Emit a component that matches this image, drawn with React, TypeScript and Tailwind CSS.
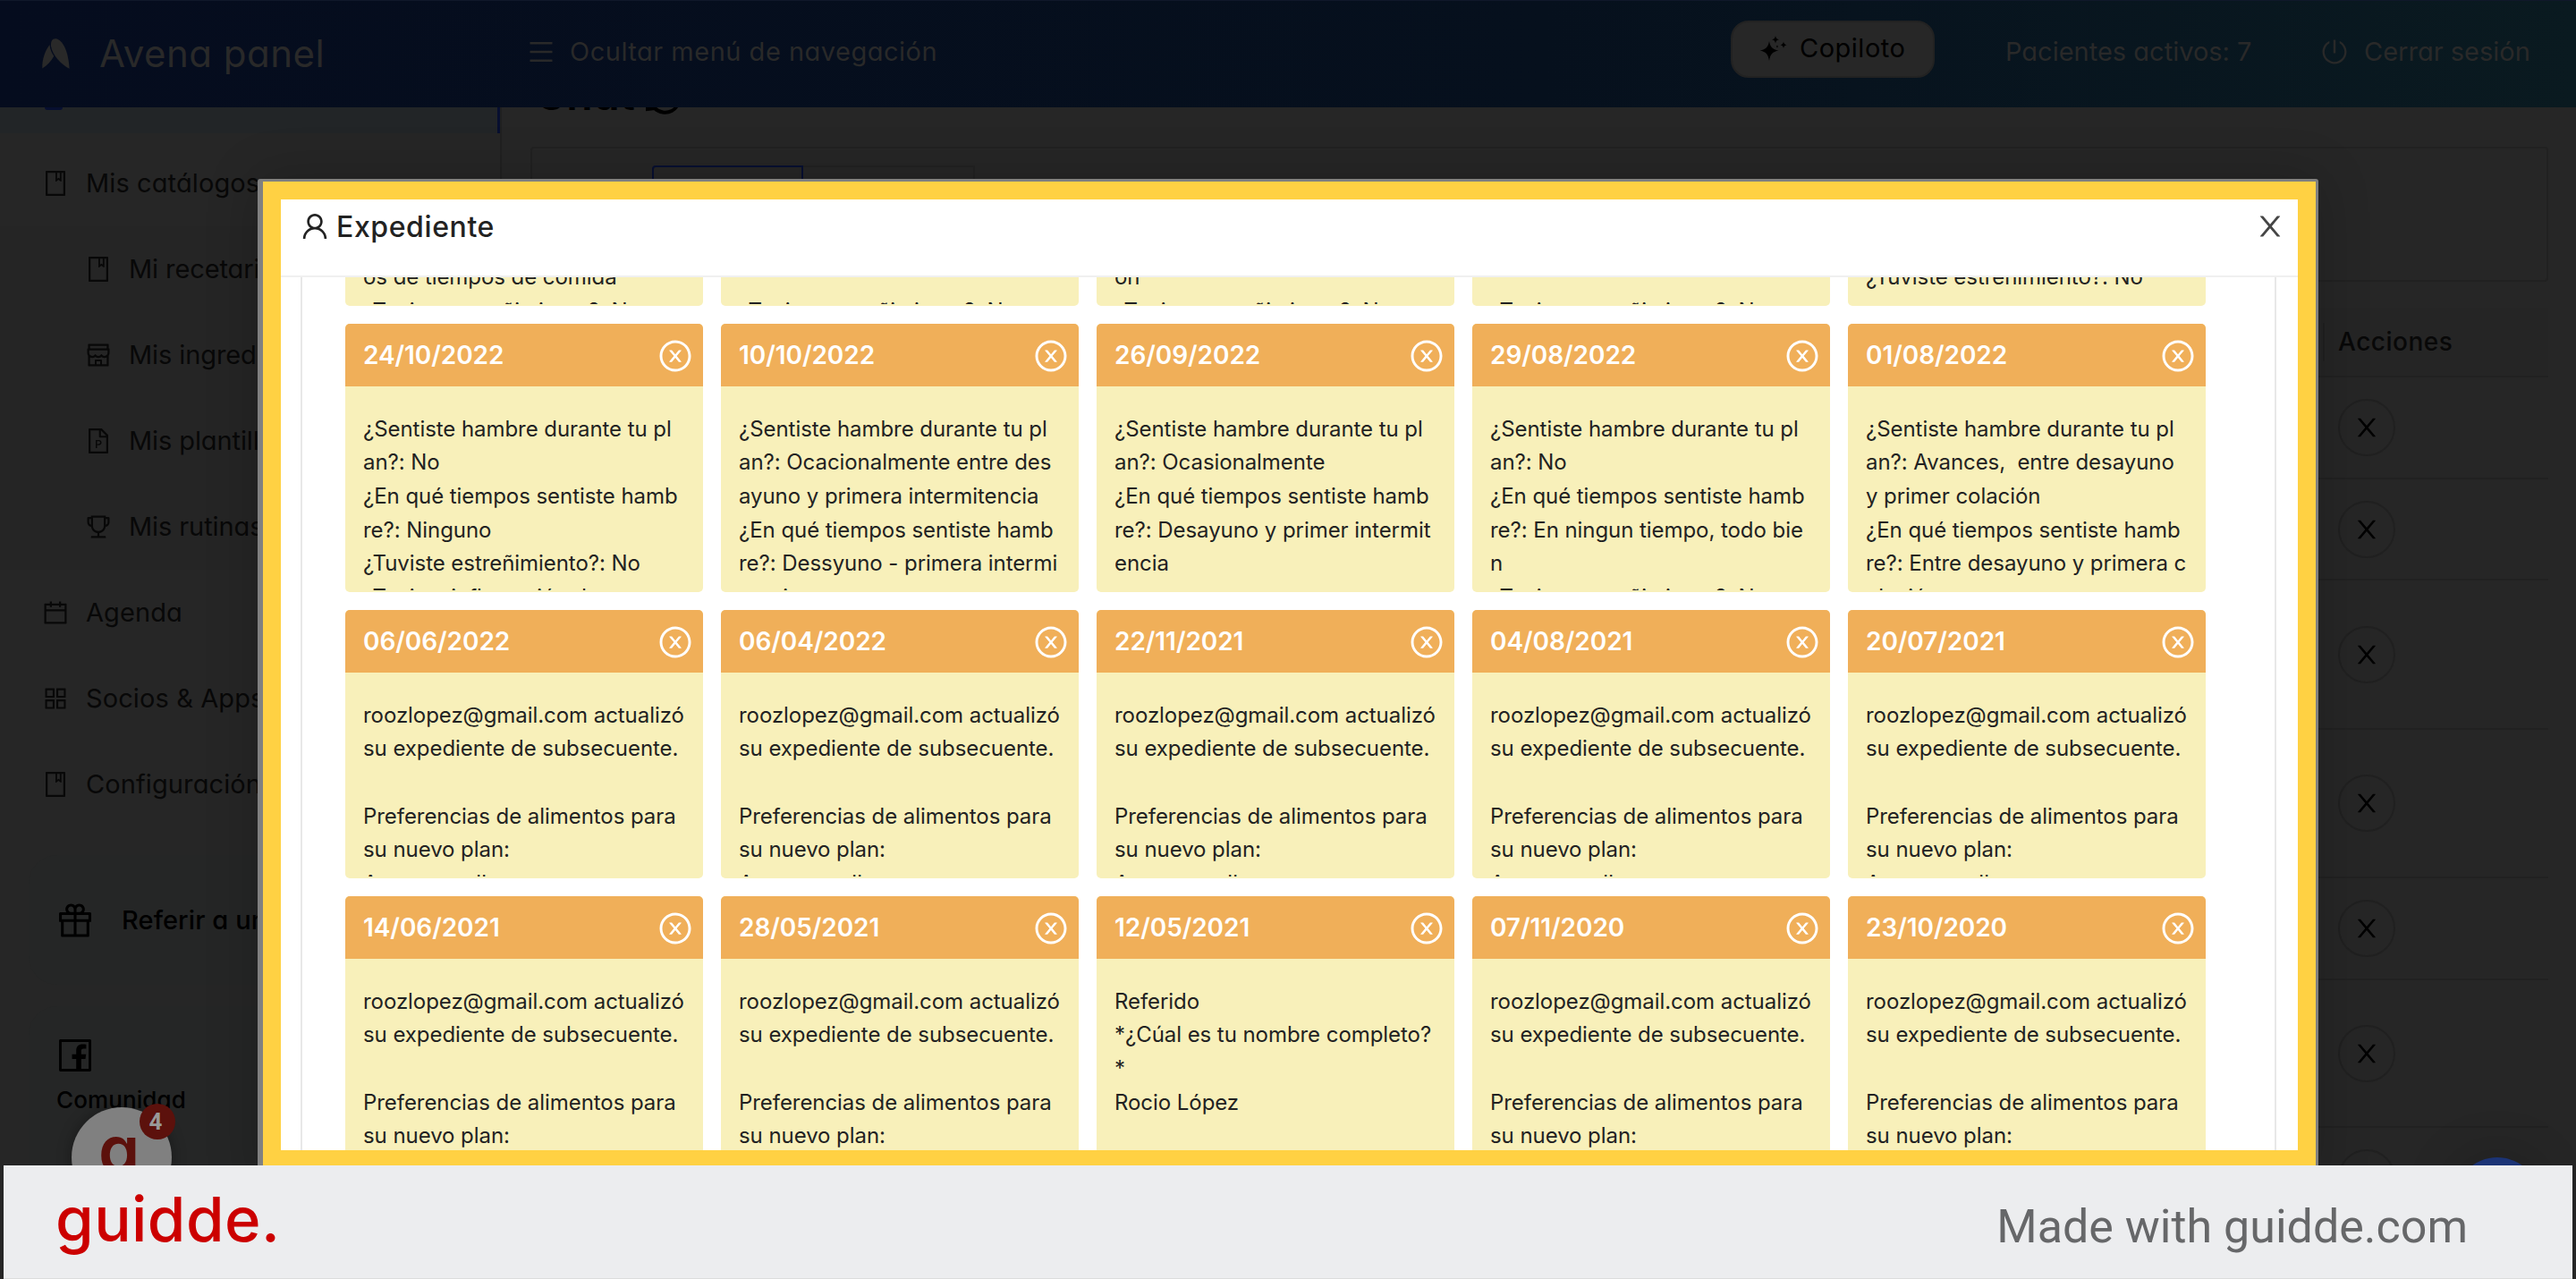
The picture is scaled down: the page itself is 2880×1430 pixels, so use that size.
import {
  AiOutlineAppstore,
  AiOutlineBook,
  AiOutlineCalendar,
  AiOutlineFacebook,
  AiOutlineFilePpt,
  AiOutlineGift,
  AiOutlineMenu,
  AiOutlinePoweroff,
  AiOutlineShop,
  AiOutlineTrophy,
  AiOutlineUser,
} from "react-icons/ai";

type Note = { date: string; lines: string[] };

const tuviste = "¿Tuviste estreñimiento?: No";

// bottoms of the notes that are scrolled under the modal header
const scrolledNotes = [
  ["os de tiempos de comida", tuviste],
  ["", tuviste],
  ["on", tuviste],
  ["", tuviste],
  [tuviste],
];

const subsecuente = [
  "roozlopez@gmail.com actualizó",
  "su expediente de subsecuente.",
  "",
  "Preferencias de alimentos para",
  "su nuevo plan:",
  "Agregar pollo",
];

const notes: Note[] = [
  {
    date: "24/10/2022",
    lines: [
      "¿Sentiste hambre durante tu pl",
      "an?: No",
      "¿En qué tiempos sentiste hamb",
      "re?: Ninguno",
      tuviste,
      "¿Tuviste inflamación durante t",
    ],
  },
  {
    date: "10/10/2022",
    lines: [
      "¿Sentiste hambre durante tu pl",
      "an?: Ocacionalmente entre des",
      "ayuno y primera intermitencia",
      "¿En qué tiempos sentiste hamb",
      "re?: Dessyuno - primera intermi",
      "tencia",
    ],
  },
  {
    date: "26/09/2022",
    lines: [
      "¿Sentiste hambre durante tu pl",
      "an?: Ocasionalmente",
      "¿En qué tiempos sentiste hamb",
      "re?: Desayuno y primer intermit",
      "encia",
    ],
  },
  {
    date: "29/08/2022",
    lines: [
      "¿Sentiste hambre durante tu pl",
      "an?: No",
      "¿En qué tiempos sentiste hamb",
      "re?: En ningun tiempo, todo bie",
      "n",
      tuviste,
    ],
  },
  {
    date: "01/08/2022",
    lines: [
      "¿Sentiste hambre durante tu pl",
      "an?: Avances,  entre desayuno",
      "y primer colación",
      "¿En qué tiempos sentiste hamb",
      "re?: Entre desayuno y primera c",
      "olación",
    ],
  },
  { date: "06/06/2022", lines: subsecuente },
  { date: "06/04/2022", lines: subsecuente },
  { date: "22/11/2021", lines: subsecuente },
  { date: "04/08/2021", lines: subsecuente },
  { date: "20/07/2021", lines: subsecuente },
  { date: "14/06/2021", lines: subsecuente },
  { date: "28/05/2021", lines: subsecuente },
  {
    date: "12/05/2021",
    lines: ["Referido", "*¿Cúal es tu nombre completo?", "*", "Rocio López"],
  },
  { date: "07/11/2020", lines: subsecuente },
  { date: "23/10/2020", lines: subsecuente },
];

const catalogItems = [
  { label: "Mi recetario", Icon: AiOutlineBook },
  { label: "Mis ingredientes", Icon: AiOutlineShop },
  { label: "Mis plantillas", Icon: AiOutlineFilePpt },
  { label: "Mis rutinas", Icon: AiOutlineTrophy },
];

const mainItems = [
  { label: "Agenda", Icon: AiOutlineCalendar },
  { label: "Socios & Apps", Icon: AiOutlineAppstore },
  { label: "Configuración", Icon: AiOutlineBook },
];

const rowHeights = [
  "h-[114px]",
  "h-[113px]",
  "h-[167px]",
  "h-[166px]",
  "h-[114px]",
  "h-[165px]",
  "h-[114px]",
];

const CloseIcon = ({ className }: { className: string }) => (
  <svg viewBox="0 0 1024 1024" fill="currentColor" className={className}>
    <path d="M563.8 512l262.5-312.9c4.4-5.2.7-13.1-6.1-13.1h-79.8c-4.7 0-9.2 2.1-12.3 5.7L511.6 449.8 295.1 191.7c-3-3.6-7.5-5.7-12.3-5.7H203c-6.8 0-10.5 7.9-6.1 13.1L459.4 512 196.9 824.9A7.95 7.95 0 0 0 203 838h79.8c4.7 0 9.2-2.1 12.3-5.7l216.5-258.1 216.5 258.1c3 3.6 7.5 5.7 12.3 5.7h79.8c6.8 0 10.5-7.9 6.1-13.1L563.8 512z" />
  </svg>
);

const CloseCircleIcon = () => (
  <svg viewBox="0 0 1024 1024" fill="currentColor" className="size-10">
    <path d="M685.4 354.8c0-4.4-3.6-8-8-8l-66 .3L512 465.6l-99.3-118.4-66.1-.3c-4.4 0-8 3.5-8 8 0 1.9.7 3.7 1.9 5.2l130.1 155L340.5 670a8.32 8.32 0 0 0-1.9 5.2c0 4.4 3.6 8 8 8l66.1-.3L512 564.4l99.3 118.4 66 .3c4.4 0 8-3.5 8-8 0-1.9-.7-3.7-1.9-5.2L553.5 515l130.1-155c1.2-1.4 1.8-3.3 1.8-5.2z" />
    <path d="M512 65C264.6 65 64 265.6 64 513s200.6 448 448 448 448-200.6 448-448S759.4 65 512 65zm0 820c-205.4 0-372-166.6-372-372s166.6-372 372-372 372 166.6 372 372-166.6 372-372 372z" />
  </svg>
);

const SparkIcon = () => (
  <svg viewBox="0 0 32 30" fill="currentColor" className="h-[30px] w-8">
    <path d="M11 6c1.2 6.500 3.500 9 10.500 10.500C14.500 18 12.200 20.500 11 28 9.800 20.500 7.500 18 .5 16.500 7.500 15 9.800 12.500 11 6z" />
    <path d="M18 0c.5 2.700 1.500 3.700 4 4.200-2.500.5-3.500 1.500-4 4.300-.5-2.800-1.500-3.800-4-4.300 2.500-.5 3.500-1.500 4-4.200z" />
    <path d="M27 6.500c.4 2.200 1.300 3.200 3.500 3.700-2.200.5-3.100 1.500-3.500 3.800-.4-2.300-1.300-3.300-3.500-3.800 2.200-.5 3.100-1.500 3.500-3.700z" />
    <path d="M20 10.500l.8 1.500-.8 1.500-1-1.500z" />
  </svg>
);

const LogoIcon = () => (
  <svg viewBox="0 0 31 34" fill="currentColor" className="h-[34px] w-[31px]">
    <path d="M8.500 7C4 13 0 22 .3 33.500c5.500-3.500 10-8 13-13.800C10.500 16 9 12 8.500 7z" />
    <path d="M10.300 4C11 1 13 .2 15.500.3 23 1.500 29.500 14 30.600 33.800 22 29.500 11.500 19 10 8.500c-.2-1.500 0-3 .3-4.500z" />
  </svg>
);

const Header = () => (
  <header className="flex h-[120px] shrink-0 items-start border-t border-[#10182a] bg-linear-to-r from-[#050c1e] via-[#06101d] via-60% to-[#0a1a20] text-[29px] text-[#292929]">
    <div className="flex w-[589px] items-center pt-[29px] pl-[47px]">
      <LogoIcon />
      <span className="ml-[33px] text-[42px] leading-[60px] tracking-[0.5px]">
        Avena panel
      </span>
    </div>
    <div className="flex items-center pt-[36px]">
      <AiOutlineMenu className="size-8" />
      <span className="ml-[16px] leading-[42px] tracking-[0.5px]">
        Ocultar menú de navegación
      </span>
    </div>
    <div className="mt-[22px] ml-auto flex h-16 w-[228px] items-center rounded-[20px] border-2 border-[#222] bg-[#272727] pl-[30px] text-black">
      <SparkIcon />
      <span className="ml-[13px] pb-[2px] tracking-[0.5px]">Copiloto</span>
    </div>
    <span className="mt-[36px] ml-[79px] w-[352px] leading-[42px]">
      Pacientes activos: 7
    </span>
    <div className="flex w-[286px] items-center pt-[36px]">
      <AiOutlinePoweroff className="size-8" />
      <span className="ml-[17px] leading-[42px]">Cerrar sesión</span>
    </div>
  </header>
);

const Sidebar = () => (
  <aside className="relative flex w-[561px] shrink-0 flex-col border-r-2 border-[#202020] text-[29px] tracking-[0.1px] text-[#080808]">
    <div className="h-[29px] w-full border-r-[3px] border-[#070f30] bg-[#222527]">
      <div className="ml-[50px] h-[3px] w-5 rounded-b-[10px] bg-[#070f30]" />
    </div>
    <div className="mt-2 flex h-24 items-center gap-[18px] pl-[46px]">
      <AiOutlineBook className="size-8" />
      Mis catálogos
    </div>
    <div className="bg-[#252525]">
      {catalogItems.map(({ label, Icon }) => (
        <div
          key={label}
          className="flex h-24 items-center gap-[18px] pl-[94px] tracking-[-0.1px]"
        >
          <Icon className="size-8" />
          {label}
        </div>
      ))}
    </div>
    {mainItems.map(({ label, Icon }) => (
      <div key={label} className="flex h-24 items-center gap-[18px] pl-[46px]">
        <Icon className="size-8" />
        {label}
      </div>
    ))}
    <div className="mx-8 mt-[31px] flex h-[145px] items-center gap-[29px] rounded-[32px] bg-[#252626] pl-[29px] font-medium text-black">
      <AiOutlineGift className="size-[46px]" />
      Referir a un colega
    </div>
    <div className="mx-8 mt-6 h-[240px] rounded-[32px] bg-[#252626] pt-8 pl-[29px] text-black">
      <AiOutlineFacebook className="size-[46px]" />
      <p className="mt-[7px] ml-[2px] text-[26px] font-medium">Comunidad</p>
    </div>
  </aside>
);

const Content = () => (
  <main className="relative flex-1 pr-[31px] pl-8">
    <div className="-mt-[62px] flex h-[106px] items-start pl-[5px]">
      <h1 className="pt-[2px] text-[48px] leading-[92px] font-semibold text-black">
        Chat
      </h1>
      <svg
        viewBox="0 0 40 46"
        fill="none"
        stroke="black"
        strokeWidth="4"
        className="mt-[25px] ml-[11px] h-[46px] w-10"
      >
        <path d="M3 24v15l8-1c5 5 13 6 19 3 4-2 7-6 8-12" />
      </svg>
    </div>
    <div className="h-[151px] rounded-[4px] border-2 border-[#212121] pt-[19px] pl-[134px]">
      <div className="flex h-16">
        <div className="w-[169px] rounded-l-[4px] border-2 border-[#070f30]" />
        <div className="w-[192px] border-2 border-l-0 border-[#222]" />
      </div>
    </div>
    <div className="mt-[29px] flex h-[78px] items-center justify-end border-b-2 border-[#212121] bg-[#252525]">
      <div className="flex h-[43px] w-[252px] items-center border-l-2 border-[#202020] pl-[15px] text-[28px] font-medium tracking-[0.5px] text-[#080808]">
        Acciones
      </div>
    </div>
    {rowHeights.map((height, i) => (
      <div
        key={i}
        className={`flex items-center justify-end border-b-2 border-[#212121] pr-[171px] ${height}`}
      >
        <div className="flex size-16 items-center justify-center rounded-full border-2 border-[#202020] text-black">
          <CloseIcon className="size-8" />
        </div>
      </div>
    ))}
  </main>
);

const NoteCard = ({ date, lines }: Note) => (
  <div className="h-[300px] overflow-hidden rounded-[5px] bg-[#f8f0ba] pb-[2px]">
    <div className="flex h-[70px] items-center justify-between bg-[#f0af59] pt-px pr-[11px] pl-5 text-white">
      <span className="text-[28px] font-semibold [font-feature-settings:'cv11']">
        {date}
      </span>
      <CloseCircleIcon />
    </div>
    <div className="h-[228px] overflow-hidden pt-[28.5px] pl-5">
      {lines.map((line, i) => (
        <p key={i} className="h-[37.7px]">
          {line}
        </p>
      ))}
    </div>
  </div>
);

const ExpedienteModal = () => (
  <div className="absolute top-[200px] left-[288px] h-[1130px] w-[2304px] rounded-t-[3px] bg-[#808080] pt-[3px] pr-[3px] pl-[6px] shadow-[0_0_60px_rgba(0,0,0,0.2)]">
    <div className="flex h-[1100px] flex-col border-x-[20px] border-t-[20px] border-b-[17px] border-[#ffd143] bg-white">
      <div className="flex h-[87px] shrink-0 items-start justify-between border-b-2 border-[#f0f0f0] pt-[5px] pr-[13px] pl-[20px] text-[#222]">
        <div className="flex h-[50px] items-center gap-[6px]">
          <AiOutlineUser className="size-9" />
          <h2 className="pt-[2px] text-[32px] font-medium tracking-[0.6px] [font-feature-settings:'cv11']">
            Expediente
          </h2>
        </div>
        <CloseIcon className="mt-[7px] size-9 text-[#454545]" />
      </div>
      <div className="mr-6 ml-[22px] min-h-0 flex-1 overflow-hidden border-x-2 border-[#e8e8e8] pl-12">
        <div className="grid grid-cols-[repeat(5,400px)] gap-5 text-[24px] leading-[37.7px] tracking-[-0.06px] whitespace-pre text-[#222]">
          {scrolledNotes.map((lines, i) => (
            <div key={i} className="h-8 rounded-b-[5px] bg-[#f8f0ba]">
              <div className="h-[30px] overflow-hidden pl-5">
                <div className="-mt-[19px]">
                  {lines.map((line, j) => (
                    <p key={j} className="h-[37.7px]">
                      {line}
                    </p>
                  ))}
                </div>
              </div>
            </div>
          ))}
          {notes.map((note) => (
            <NoteCard key={note.date} {...note} />
          ))}
        </div>
      </div>
    </div>
  </div>
);

const App = () => {
  return (
    <div className="relative flex h-[1430px] w-[2880px] flex-col overflow-hidden bg-[#262626] font-['Inter',sans-serif]">
      <div className="flex h-full flex-col [font-feature-settings:'cv11']">
        <div className="relative z-10">
          <Header />
        </div>
        <div className="flex h-[1310px]">
          <Sidebar />
          <Content />
        </div>
      </div>

      <ExpedienteModal />

      <div className="absolute top-[1238px] left-[80px] size-28 rounded-full bg-[#808080] text-[#5c110c] shadow-[0_0_16px_rgba(0,0,0,0.35)]">
        <span className="absolute top-[10px] left-[30px] text-[74px] leading-[74px] font-semibold">
          g
        </span>
        <span className="absolute -top-1 left-[76px] flex size-10 items-center justify-center rounded-full bg-[#5c110c] pr-1 font-['Roboto'] text-[26px] font-bold text-[#999]">
          4
        </span>
      </div>
      <div className="absolute top-[1294px] left-[2744px] size-[96px] rounded-full bg-[#1c3476] shadow-[0_0_60px_rgba(0,0,0,0.2)]" />

      <footer className="absolute top-[1303px] left-[4px] flex h-[127px] w-[2872px] items-center justify-between border-b border-[#dcdcdc] bg-[#ecedef] pr-[117px] pl-[58px]">
        <span className="pb-[6px] text-[69px] leading-[90px] font-medium tracking-[0.4px] text-[#cc0000]">
          guidde.
        </span>
        <span className="pt-[11px] font-['Roboto'] text-[52px] leading-[60px] text-[#666769]">
          Made with guidde.com
        </span>
      </footer>
    </div>
  );
};

export default App;
